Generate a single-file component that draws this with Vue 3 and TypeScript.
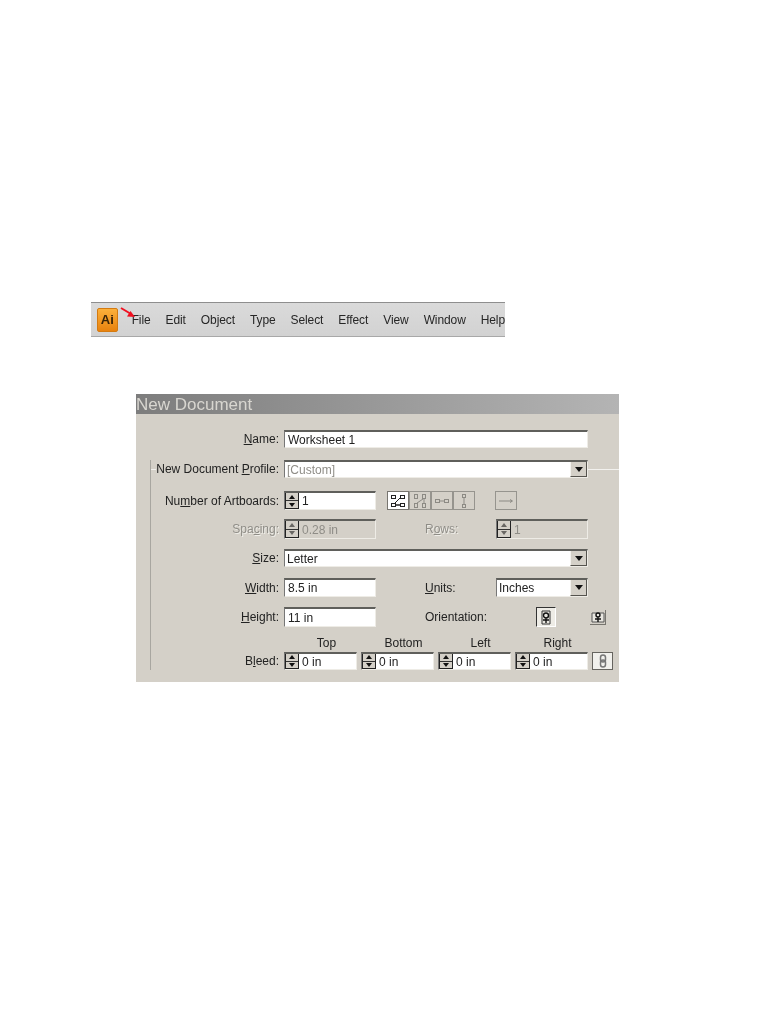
<script setup lang="ts">
const menus: string[] = ['File', 'Edit', 'Object', 'Type', 'Select', 'Effect', 'View', 'Window', 'Help']
const bleed = [
  { head: 'Top', hu: '' },
  { head: 'Bottom', hu: '' },
  { head: 'Left', hu: '' },
  { head: 'Right', hu: '' },
]
</script>

<template>
  <div class="page">
    <div class="menubar">
      <div class="ai-logo">Ai</div>
      <svg class="arrow" width="20" height="14" viewBox="0 0 20 14">
        <path d="M1 1 L11 7" stroke="#f01020" stroke-width="2" fill="none" />
        <path d="M15 10 L7 9.5 L10.5 4 Z" fill="#f01020" />
      </svg>
      <span v-for="m in menus" :key="m" class="menu-item">{{ m }}</span>
    </div>

    <div class="dialog">
      <div class="title">New Document</div>
      <div class="body">
        <div class="row name-row">
          <span class="label"><u>N</u>ame:</span>
          <div class="field wide">Worksheet 1</div>
        </div>

        <div class="group">
          <div class="row profile-row">
            <span class="label lined"><i class="line"></i><span>New Document <u>P</u>rofile:</span></span>
            <div class="field wide off select">
              <span class="val">[Custom]</span>
              <span class="drop"><i></i></span>
            </div>
            <i class="line"></i>
          </div>

          <div class="row r-art">
            <span class="label">Nu<u>m</u>ber of Artboards:</span>
            <div class="field short spin">
              <span class="spinner"><i class="up"></i><i class="dn"></i></span>
              <span class="val">1</span>
            </div>
            <div class="arrange">
              <span class="abtn on">
                <svg width="20" height="18" viewBox="0 0 20 18" fill="none" stroke="#222" stroke-width="1">
                  <rect x="3.5" y="3.5" width="4" height="3" /><rect x="12.5" y="3.5" width="4" height="3" />
                  <path d="M12 6 L7 11" /><rect x="3.5" y="11.5" width="4" height="3" /><rect x="12.5" y="11.5" width="4" height="3" />
                  <path d="M8 13 H12" stroke-width="1.5" />
                </svg>
              </span>
              <span class="abtn">
                <svg width="20" height="18" viewBox="0 0 20 18" fill="none" stroke="#8c8a84" stroke-width="1">
                  <rect x="4.5" y="2.5" width="3" height="4" /><rect x="12.5" y="2.5" width="3" height="4" />
                  <path d="M13 7 L7 11" /><path d="M14 7 V11" />
                  <rect x="4.5" y="11.5" width="3" height="4" /><rect x="12.5" y="11.5" width="3" height="4" />
                </svg>
              </span>
              <span class="abtn">
                <svg width="20" height="18" viewBox="0 0 20 18" fill="none" stroke="#8c8a84" stroke-width="1">
                  <rect x="3.5" y="7.5" width="4" height="3" /><rect x="12.5" y="7.5" width="4" height="3" />
                  <path d="M8 9 H12" />
                </svg>
              </span>
              <span class="abtn">
                <svg width="20" height="18" viewBox="0 0 20 18" fill="none" stroke="#8c8a84" stroke-width="1">
                  <rect x="8.5" y="2.5" width="3" height="3" /><rect x="8.5" y="12.5" width="3" height="3" />
                  <path d="M10 6 V12" />
                </svg>
              </span>
            </div>
            <span class="abtn solo">
              <svg width="20" height="18" viewBox="0 0 20 18" fill="none" stroke="#8c8a84" stroke-width="1">
                <path d="M3 9 H16" /><path d="M14 7.5 L16.5 9 L14 10.5" />
              </svg>
            </span>
          </div>

          <div class="row r-spacing">
            <span class="label dim">Spa<u>c</u>ing:</span>
            <div class="field short spin off">
              <span class="spinner"><i class="up"></i><i class="dn"></i></span>
              <span class="val">0.28 in</span>
            </div>
            <span class="label2 dim">R<u>o</u>ws:</span>
            <div class="field short spin off">
              <span class="spinner"><i class="up"></i><i class="dn"></i></span>
              <span class="val">1</span>
            </div>
          </div>

          <div class="row r-size">
            <span class="label"><u>S</u>ize:</span>
            <div class="field wide select">
              <span class="val">Letter</span>
              <span class="drop"><i></i></span>
            </div>
          </div>

          <div class="row r-width">
            <span class="label"><u>W</u>idth:</span>
            <div class="field short">8.5 in</div>
            <span class="label2"><u>U</u>nits:</span>
            <div class="field short select">
              <span class="val">Inches</span>
              <span class="drop"><i></i></span>
            </div>
          </div>

          <div class="row r-height">
            <span class="label"><u>H</u>eight:</span>
            <div class="field short">11 in</div>
            <span class="label2">Orientation:</span>
            <span class="orient on">
              <svg width="12" height="15" viewBox="0 0 12 15">
                <path d="M2 1 H10 V14 H2 Z" fill="#e8e6e0" stroke="#333" />
                <path d="M6 3 A2 2 0 0 1 6 8 A2 2 0 0 1 6 3 M6 8 V13 M3 10 H9" fill="none" stroke="#111" stroke-width="1.4" />
              </svg>
            </span>
            <span class="orient">
              <svg width="14" height="12" viewBox="0 0 14 12">
                <path d="M1 2 H13 V11 H1 Z" fill="#e8e6e0" stroke="#555" />
                <path d="M7 2 A2 2 0 0 1 7 6 A2 2 0 0 1 7 2 M7 6 V11 M4 8 H10" fill="none" stroke="#111" stroke-width="1.4" />
              </svg>
            </span>
          </div>

          <div class="row r-heads">
            <span v-for="b in bleed" :key="b.head" class="bhead">{{ b.head }}</span>
          </div>

          <div class="row r-bleed">
            <span class="label">B<u>l</u>eed:</span>
            <div class="bleeds">
              <div v-for="b in bleed" :key="b.head" class="field bfield spin">
                <span class="spinner"><i class="up"></i><i class="dn"></i></span>
                <span class="val">0 in</span>
              </div>
            </div>
            <span class="lock">
              <svg width="10" height="14" viewBox="0 0 10 14" fill="none" stroke="#777" stroke-width="1.5">
                <rect x="2.5" y="1" width="5" height="7" rx="2.5" />
                <rect x="2.5" y="6" width="5" height="7" rx="2.5" />
              </svg>
            </span>
          </div>
        </div>
      </div>
    </div>
  </div>
</template>

<style>
html, body { background: #fff; }
</style>

<style scoped>
.page {
  height: 1024px;
  padding-top: 302px;
  box-sizing: border-box;
  overflow: hidden;
  background: #fff;
  font-family: "Liberation Sans", Arial, sans-serif;
  font-size: 12px;
  color: #222;
  filter: blur(0.35px);
}
.menubar {
  position: relative;
  display: flex;
  align-items: center;
  gap: 15px;
  width: 414px;
  height: 35px;
  margin-left: 91px;
  padding-left: 6px;
  box-sizing: border-box;
  background: linear-gradient(#dadada, #d2d2d2);
  border-top: 1px solid #8e8e8e;
  border-bottom: 1px solid #a8a8a8;
}
.ai-logo {
  width: 22px;
  height: 24px;
  margin-right: -1px;
  background: linear-gradient(#fbb03b, #e8820e);
  border: 1px solid #d47a10;
  box-sizing: border-box;
  border-radius: 2px;
  text-align: center;
  font-weight: 700;
  font-size: 13px;
  line-height: 22px;
  color: #3a2408;
}
.arrow { position: absolute; left: 29px; top: 4px; }
.menu-item { font-size: 12px; letter-spacing: -0.1px; color: #262626; }

.dialog {
  width: 483px;
  margin: 57px 0 0 136px;
  background: #d4d0c8;
}
.title {
  height: 20px;
  padding-left: 0;
  background: linear-gradient(90deg, #7d7d7d, #b4b4b4);
  color: #d8d6d0;
  font-size: 17px;
  line-height: 21px;
}
.body { padding: 16px 0 12px 14px; }
.row { display: flex; align-items: center; }
.label {
  width: 128px;
  margin-right: 5px;
  text-align: right;
  flex: none;
}
.name-row { height: 18px; padding-left: 1px; }
.group { margin-top: 20px; border-left: 1px solid #a8a6a0; }
.profile-row { height: 18px; margin-top: -8px; }
.lined { display: flex; align-items: center; }
.line { flex: 1; height: 0; border-top: 1px solid #f2f1ee; display: block; }
.dim { color: #8f8d87; text-shadow: 1px 1px 0 #efeee9; }
.field {
  display: flex;
  align-items: center;
  box-sizing: border-box;
  height: 100%;
  padding-left: 3px;
  background: #fff;
  border-top: 2px solid #5f5f5b;
  border-left: 1px solid #777;
  border-right: 1px solid #eeece6;
  border-bottom: 1px solid #eeece6;
  flex: none;
  white-space: nowrap;
}
.wide { width: 304px; }
.short { width: 92px; }
.off { background: #d4d0c8; color: #8f8d87; }
.profile-row .off { background: #fff; }
.spin { padding-left: 0; }
.val { padding-left: 3px; flex: 1; }
.select { padding-left: 0; }
.select .val { padding-left: 2px; }
.drop {
  width: 17px;
  height: 100%;
  flex: none;
  display: flex;
  align-items: center;
  justify-content: center;
  background: #d4d0c8;
  border-right: 1px solid #55534e;
  border-bottom: 1px solid #55534e;
  border-left: 1px solid #f4f3ef;
  box-sizing: border-box;
}
.drop i {
  width: 0;
  height: 0;
  border-left: 4px solid transparent;
  border-right: 4px solid transparent;
  border-top: 5px solid #111;
}
.spinner {
  width: 14px;
  height: 100%;
  flex: none;
  display: flex;
  flex-direction: column;
  background: #d4d0c8;
  border: 1px solid #222;
  border-top: 0;
  box-sizing: border-box;
}
.spinner i {
  flex: 1;
  display: flex;
  align-items: center;
  justify-content: center;
}
.spinner i::after {
  content: "";
  width: 0;
  height: 0;
  border-left: 3px solid transparent;
  border-right: 3px solid transparent;
}
.spinner .up { border-bottom: 1px solid #333; }
.spinner .up::after { border-bottom: 4px solid #111; }
.spinner .dn::after { border-top: 4px solid #111; }
.off .spinner i::after { opacity: 0.55; }

.r-art { height: 19px; margin-top: 13px; }
.arrange { display: flex; margin-left: 11px; }
.abtn {
  width: 22px;
  height: 19px;
  display: flex;
  align-items: center;
  justify-content: center;
  box-sizing: border-box;
  border: 1px solid #96948e;
  margin-right: 0;
}
.abtn.on { background: #fff; border: 1px solid #77756f; }
.solo { margin-left: 20px; }
.r-spacing { height: 20px; margin-top: 9px; }
.label2 { width: 71px; margin-left: 49px; flex: none; white-space: nowrap; }
.r-size { height: 18px; margin-top: 10px; }
.r-width { height: 19px; margin-top: 11px; }
.r-height { height: 20px; margin-top: 10px; }
.orient {
  display: flex;
  align-items: center;
  justify-content: center;
  box-sizing: border-box;
  width: 16px;
  height: 15px;
  margin-left: 34px;
  background: #d4d0c8;
  border-right: 1px solid #77756f;
  border-bottom: 1px solid #77756f;
}
.orient.on {
  width: 20px;
  height: 20px;
  margin-left: 40px;
  background: #eeece6;
  border: 1px solid #333;
  border-right-color: #fff;
  border-bottom-color: #fff;
}
.r-heads { height: 13px; margin-top: 10px; padding-left: 133px; }
.bhead {
  width: 77px;
  text-align: center;
  line-height: 13px;
  flex: none;
  padding-left: 8px;
  box-sizing: border-box;
}
.r-bleed { height: 18px; margin-top: 2px; }
.bleeds { display: flex; gap: 4px; height: 100%; }
.bfield { width: 73px; }
.lock {
  width: 21px;
  height: 18px;
  margin-left: 4px;
  display: flex;
  align-items: center;
  justify-content: center;
  box-sizing: border-box;
  background: #f1f0ec;
  border: 1px solid #66645f;
  border-top-color: #66645f;
}
</style>
